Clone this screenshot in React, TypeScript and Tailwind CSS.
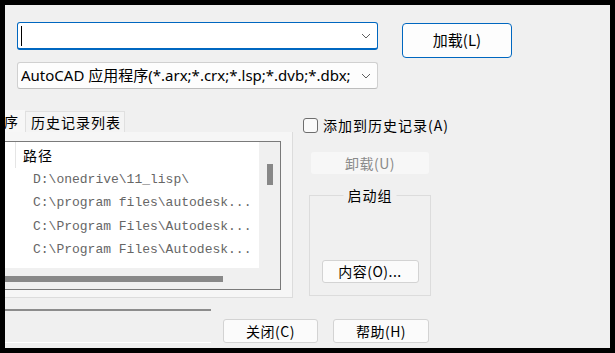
import React from "react";

const cjk = { fontFamily: '"Noto Sans CJK SC", "Noto Sans", sans-serif' };
const ui = { fontFamily: '"Noto Sans", "Noto Sans CJK SC", sans-serif' };
const mono = { fontFamily: '"Liberation Mono", "Noto Sans CJK SC", monospace' };

const paths = [
  "D:\\onedrive\\11_lisp\\",
  "C:\\program files\\autodesk...",
  "C:\\Program Files\\Autodesk...",
  "C:\\Program Files\\Autodesk...",
];

function Chevron() {
  return (
    <svg width="10" height="6" viewBox="0 0 10 6" className="shrink-0">
      <path d="M1 1 L5 5 L9 1" fill="none" stroke="#5f5f5f" strokeWidth="1" />
    </svg>
  );
}

function SmallButton({ label, className, disabled }: { label: string; className: string; disabled?: boolean }) {
  return (
    <div
      className={
        "flex items-center justify-center rounded-[3px] text-[14px] tracking-[0.5px] " +
        (disabled
          ? "bg-[#f7f7f7] text-[#8a8a8a]"
          : "border border-[#d3d3d3] bg-[#fbfbfb] text-black") +
        " " +
        className
      }
      style={cjk}
    >
      {label}
    </div>
  );
}

export default function App() {
  return (
    <div className="h-[353px] w-[615px] bg-black p-[5px]">
      <div className="flex h-[343px] w-[605px] flex-col overflow-hidden bg-[#f0f0f0]">
        {/* top: combos + load button */}
        <div className="flex pt-[17px]">
          <div className="flex w-[373px] flex-col gap-[12px] pl-[12px]">
            <div className="flex h-[28px] items-center rounded-[3px] border border-[#0067c0] border-b-2 bg-white pl-[3px] pr-[6px]">
              <div className="h-[20px] w-px bg-black" />
              <div className="flex-1" />
              <Chevron />
            </div>
            <div className="flex h-[27px] items-center rounded-[3px] border border-[#d0d0d0] border-b-[#bdbdbd] bg-[#fdfdfd] pl-[3px] pr-[6px]">
              <span className="flex-1 overflow-hidden whitespace-nowrap text-[15px] text-black" style={ui}>
                AutoCAD 应用程序(*.arx;*.crx;*.lsp;*.dvb;*.dbx;
              </span>
              <Chevron />
            </div>
          </div>
          <div
            className="ml-[24px] mt-px flex h-[35px] w-[110px] items-center justify-center rounded-[4px] border border-[#0067c0] bg-[#fdfdfd] text-[15px] text-black"
            style={cjk}
          >
            加载(L)
          </div>
        </div>

        {/* middle: tab control + right column */}
        <div className="mt-[21px] flex items-start">
          <div className="flex w-[288px] flex-col">
            <div className="flex h-[22px] items-end text-[14px] leading-[20px] text-black" style={cjk}>
              <div className="flex h-[22px] w-[20px] items-center bg-[#f7f7f7]">
                <span className="-ml-px">序</span>
              </div>
              <div className="flex h-[21px] w-[100px] items-center border-l border-r border-t border-[#e0e0e0] bg-[#f4f4f4] pl-[5px] tracking-[1px]">
                历史记录列表
              </div>
            </div>
            <div className="flex h-[166px] flex-col border-b border-r border-[#dcdcdc] bg-[#f6f6f6] pr-[11px] pt-[9px]">
              <div className="flex h-[149px] w-[276px] flex-col border-b border-r border-t border-[#7a7a7a]">
                <div className="flex flex-1">
                  <div className="flex flex-1 flex-col bg-white">
                    <div className="flex h-[26px] items-center">
                      <div className="h-full w-[11px] border-r border-[#e5e5e5]" />
                      <span className="pl-[7px] text-[14px] tracking-[1px] text-black" style={cjk}>
                        路径
                      </span>
                    </div>
                    <div className="flex flex-col pl-[28px]">
                      {paths.map((p, i) => (
                        <div
                          key={i}
                          className="flex h-[23.4px] items-center whitespace-nowrap text-[13px] text-[#666666]"
                          style={mono}
                        >
                          {p}
                        </div>
                      ))}
                    </div>
                  </div>
                  <div className="flex w-[21px] justify-center bg-[#f0f0f0] pt-[22px]">
                    <div className="h-[21px] w-[6px] bg-[#888888]" />
                  </div>
                </div>
                <div className="flex h-[21px] items-center bg-[#f0f0f0]">
                  <div className="h-[6px] w-[218px] bg-[#888888]" />
                </div>
              </div>
            </div>
          </div>

          <div className="ml-[10px] flex flex-col">
            <div className="mt-[8px] flex h-[15px] items-center gap-[5px]">
              <div className="h-[15px] w-[15px] rounded-[3px] border border-[#6e6e6e] bg-[#fafafa]" />
              <span className="text-[14px] leading-[15px] tracking-[1px] text-black" style={cjk}>
                添加到历史记录(A)
              </span>
            </div>
            <SmallButton label="卸载(U)" disabled className="ml-[8px] mt-[19px] h-[22px] w-[118px]" />
            <div className="relative ml-[6px] mt-[21px] flex h-[101px] w-[122px] flex-col items-center border border-[#dcdcdc]">
              <span
                className="absolute -top-[11px] left-1/2 -translate-x-1/2 bg-[#f0f0f0] px-[4px] text-[14px] leading-[20px] tracking-[1px] text-black"
                style={cjk}
              >
                启动组
              </span>
              <SmallButton label="内容(O)..." className="mt-[64px] h-[23px] w-[97px]" />
            </div>
          </div>
        </div>

        {/* bottom row */}
        <div className="mt-[11px] flex items-end">
          <div className="h-[34px] w-[206px] border-t-2 border-b border-t-[#8c8c8c] border-b-white bg-[#f0f0f0]" />
          <SmallButton label="关闭(C)" className="ml-[12px] h-[24px] w-[95px]" />
          <SmallButton label="帮助(H)" className="ml-[15px] h-[24px] w-[96px]" />
        </div>
      </div>
    </div>
  );
}
